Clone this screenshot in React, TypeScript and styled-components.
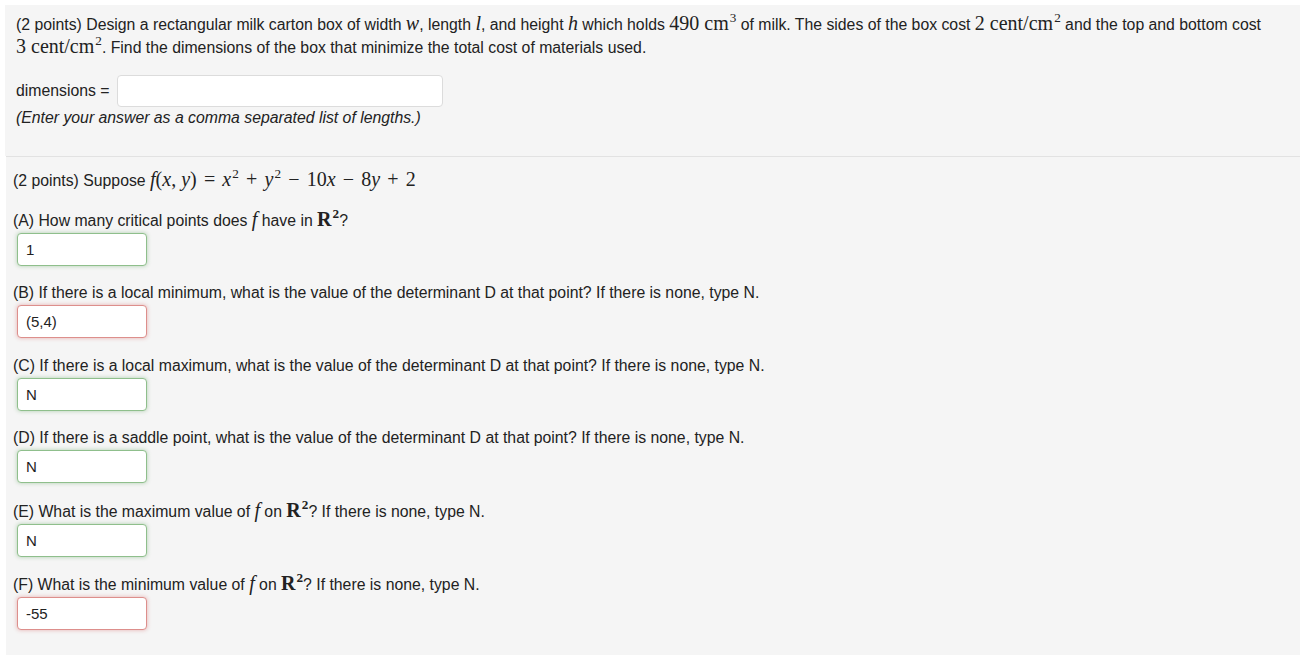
import React from 'react'
import styled, { createGlobalStyle } from 'styled-components'

const GlobalStyle = createGlobalStyle`
  html, body {
    margin: 0;
    padding: 0;
    background: #ffffff;
  }
  body {
    font-family: 'Liberation Sans', Arial, sans-serif;
    color: #222222;
  }
`

const Page = styled.div`
  width: 1306px;
  height: 662px;
  box-sizing: border-box;
  padding: 5px 6px 0 5px;
  overflow: hidden;
`

const Panel = styled.div<{ divider?: boolean }>`
  background: #f5f5f5;
  border-top: ${({ divider }) => (divider ? '1px solid #e2e2e2' : 'none')};
  padding: ${({ divider }) => (divider ? '12px 8px 25px 7px' : '8px 11px 28px 11px')};
  margin-left: ${({ divider }) => (divider ? '1px' : '0')};
`

const Text = styled.div<{ lh?: number }>`
  font-size: 15.8px;
  line-height: ${({ lh }) => lh ?? 22}px;
`

const Hint = styled.div`
  font-size: 15.8px;
  font-style: italic;
  line-height: 20px;
  margin-top: 1px;
`

const FieldRow = styled.div`
  display: flex;
  align-items: center;
  gap: 7px;
  margin-top: 16px;
  font-size: 15.8px;
`

const Question = styled.div`
  margin-top: 16.5px;
  &:first-of-type {
    margin-top: 15.5px;
  }
`

const AnswerBox = styled.div<{ status?: 'correct' | 'incorrect'; wide?: boolean }>`
  box-sizing: border-box;
  width: ${({ wide }) => (wide ? '326px' : '130px')};
  height: ${({ wide }) => (wide ? '32px' : '33px')};
  margin: ${({ wide }) => (wide ? '0' : '1px 0 0 4px')};
  background: #ffffff;
  border-radius: 4px;
  border: 1px solid
    ${({ status }) => (status === 'correct' ? '#8fbf8c' : status === 'incorrect' ? '#dd8f8c' : '#dcdcdc')};
  box-shadow: ${({ status }) =>
    status === 'correct'
      ? '0 0 4px rgba(90, 160, 90, 0.45)'
      : status === 'incorrect'
        ? '0 0 4px rgba(210, 90, 90, 0.45)'
        : 'none'};
  padding: 0 8px;
  display: flex;
  align-items: center;
  font-size: 15px;
  color: #222222;
`

const M = styled.span`
  font-family: 'Liberation Serif', 'Times New Roman', serif;
  font-size: 20px;
  line-height: 1;
  white-space: nowrap;
`

const V = styled.span`
  font-family: 'Liberation Serif', 'Times New Roman', serif;
  font-style: italic;
  font-size: 20px;
  line-height: 1;
`

const Bold = styled.span`
  font-family: 'Liberation Serif', 'Times New Roman', serif;
  font-weight: bold;
  font-size: 20px;
  line-height: 1;
  white-space: nowrap;
`

const Sup = styled.sup`
  font-size: 0.66em;
  line-height: 0;
  vertical-align: 0.6em;
  margin-left: 1px;
`

const Op = styled.span`
  margin: 0 0.36em;
`

const questions: { label: React.ReactNode; value: string; status: 'correct' | 'incorrect' }[] = [
  {
    label: (
      <>
        (A) How many critical points does <V>f</V> have in{' '}
        <Bold>
          R<Sup>2</Sup>
        </Bold>
        ?
      </>
    ),
    value: '1',
    status: 'correct',
  },
  {
    label: '(B) If there is a local minimum, what is the value of the determinant D at that point? If there is none, type N.',
    value: '(5,4)',
    status: 'incorrect',
  },
  {
    label: '(C) If there is a local maximum, what is the value of the determinant D at that point? If there is none, type N.',
    value: 'N',
    status: 'correct',
  },
  {
    label: '(D) If there is a saddle point, what is the value of the determinant D at that point? If there is none, type N.',
    value: 'N',
    status: 'correct',
  },
  {
    label: (
      <>
        (E) What is the maximum value of <V>f</V> on{' '}
        <Bold>
          R<Sup>2</Sup>
        </Bold>
        ? If there is none, type N.
      </>
    ),
    value: 'N',
    status: 'correct',
  },
  {
    label: (
      <>
        (F) What is the minimum value of <V>f</V> on{' '}
        <Bold>
          R<Sup>2</Sup>
        </Bold>
        ? If there is none, type N.
      </>
    ),
    value: '-55',
    status: 'incorrect',
  },
]

export default function App() {
  return (
    <>
      <GlobalStyle />
      <Page>
        <Panel>
          <Text lh={23}>
            (2 points) Design a rectangular milk carton box of width <V>w</V>, length <V>l</V>, and height <V>h</V>{' '}
            which holds{' '}
            <M>
              490 cm<Sup>3</Sup>
            </M>{' '}
            of milk. The sides of the box cost{' '}
            <M>
              2 cent/cm<Sup>2</Sup>
            </M>{' '}
            and the top and bottom cost{' '}
            <M>
              3 cent/cm<Sup>2</Sup>
            </M>
            . Find the dimensions of the box that minimize the total cost of materials used.
          </Text>
          <FieldRow>
            dimensions =
            <AnswerBox wide />
          </FieldRow>
          <Hint>(Enter your answer as a comma separated list of lengths.)</Hint>
        </Panel>
        <Panel divider>
          <Text>
            (2 points) Suppose{' '}
            <M>
              <V>f</V>(<V>x</V>, <V>y</V>)<Op>=</Op>
              <V>x</V>
              <Sup>2</Sup>
              <Op>+</Op>
              <V>y</V>
              <Sup>2</Sup>
              <Op>−</Op>10<V>x</V>
              <Op>−</Op>8<V>y</V>
              <Op>+</Op>2
            </M>
          </Text>
          {questions.map((q, i) => (
            <Question key={i}>
              <Text>{q.label}</Text>
              <AnswerBox status={q.status}>{q.value}</AnswerBox>
            </Question>
          ))}
        </Panel>
      </Page>
    </>
  )
}
